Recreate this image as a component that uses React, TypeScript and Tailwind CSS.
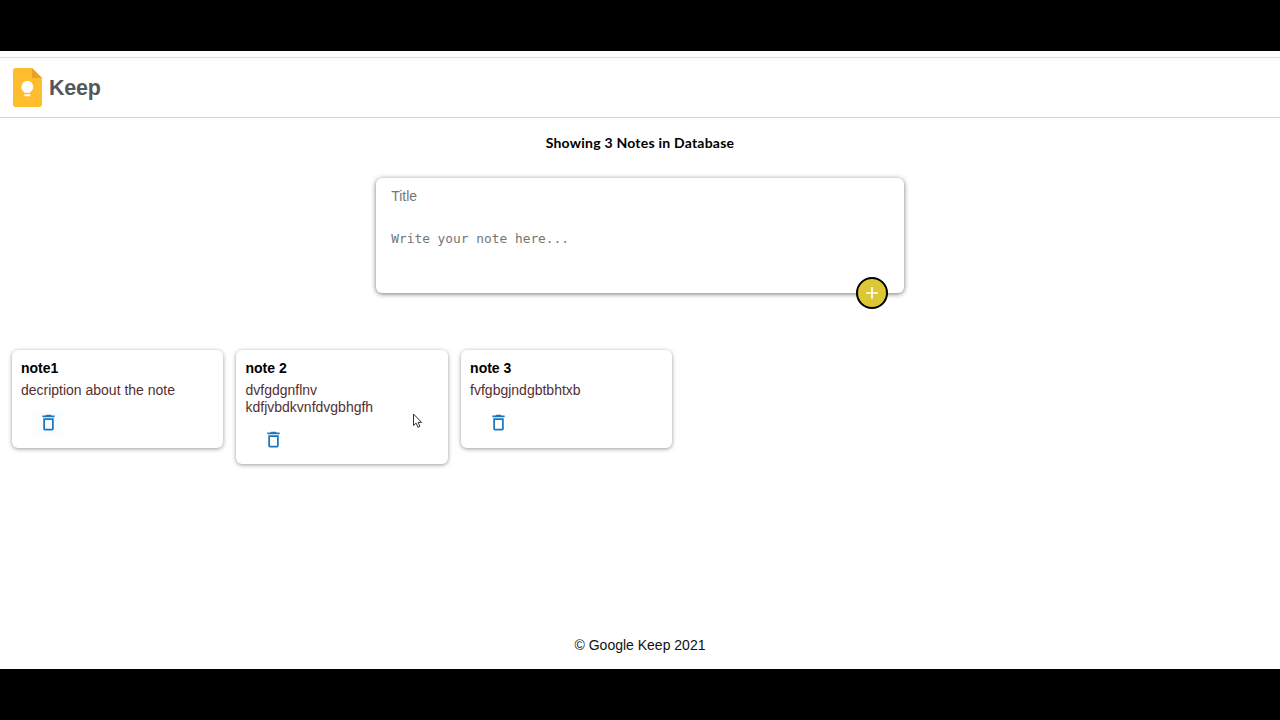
type Note = { title: string; lines: string[]; hovered?: boolean };

const notes: Note[] = [
  { title: "note1", lines: ["decription about the note"], hovered: true },
  { title: "note 2", lines: ["dvfgdgnflnv", "kdfjvbdkvnfdvgbhgfh"] },
  { title: "note 3", lines: ["fvfgbgjndgbtbhtxb"] },
];

function KeepLogo() {
  return (
    <svg className="h-[39px] w-[29px]" viewBox="0 0 29 39">
      <path fill="#fdbd2c" d="M2.7 0H19L29 10V36.3A2.7 2.7 0 0 1 26.3 39H2.7A2.7 2.7 0 0 1 0 36.3V2.7A2.7 2.7 0 0 1 2.7 0Z" />
      <path fill="#e8a02a" d="M19 0L29 10H19Z" />
      <path fill="#fff" d="M14.3 13a5.9 5.9 0 0 1 3.1 10.9v.9h-6.2v-.9a5.9 5.9 0 0 1 3.1-10.9ZM11.3 26.2h6v2h-6z" />
    </svg>
  );
}

function TrashIcon() {
  return (
    <svg className="size-[21px]" viewBox="0 0 24 24" fill="#1b76bd">
      <path d="M6 19c0 1.1.9 2 2 2h8c1.1 0 2-.9 2-2V7H6v12zM8 9h8v10H8V9zm7.5-5l-1-1h-5l-1 1H5v2h14V4z" />
    </svg>
  );
}

function NoteCard({ note }: { note: Note }) {
  return (
    <article className="w-[211.6px] rounded-[6px] bg-white px-[9.4px] pt-[9px] pb-[11px] shadow-[0_1px_4px_rgba(0,0,0,0.4)]">
      <h2 className="h-[19px] text-[14px] leading-[19px] font-bold text-black">{note.title}</h2>
      <div className="mt-[4px] text-[14px] leading-[16.5px] text-[#532f32]">
        {note.lines.map((line) => (
          <p key={line} className="whitespace-nowrap">{line}</p>
        ))}
      </div>
      <button
        aria-label="Delete note"
        className={`mt-[12px] flex h-[26px] w-[56px] items-center justify-center rounded-[3px] pb-[2px] ${note.hovered ? "bg-linear-to-r from-white via-[#f8fcff] to-white" : ""}`}
      >
        <TrashIcon />
      </button>
    </article>
  );
}

export default function App() {
  return (
    <div className="flex h-[720px] w-[1280px] flex-col overflow-hidden bg-black py-[51px] font-['Liberation_Sans',Arial,sans-serif]">
      <div className="flex min-h-0 flex-1 flex-col bg-white">
        <div className="h-[7px] shrink-0 border-b border-[#dee1e3]" />
        <header className="flex h-[60px] shrink-0 items-center gap-[7px] border-b border-[#d3d5d7] pl-[13px]">
          <KeepLogo />
          <h1 className="text-[21.5px] leading-[26px] font-bold tracking-[-0.2px] text-[#53585a]">Keep</h1>
        </header>
        <p className="mt-[15px] h-[20px] text-center font-['Lato',sans-serif] text-[14px] leading-[19px] font-bold tracking-[0.23px] text-black">
          Showing 3 Notes in Database
        </p>
        <form className="relative mx-auto mt-[25px] flex h-[115px] w-[527.6px] shrink-0 flex-col rounded-[6px] bg-white px-[15px] pt-[10px] shadow-[0_1px_5px_rgba(0,0,0,0.55)]">
          <span className="text-[14px] leading-[16px] text-[#757575]">Title</span>
          <span className="mt-[26px] font-['DejaVu_Sans_Mono',monospace] text-[12.85px] leading-[18px] text-[#757575]">
            Write your note here...
          </span>
          <button
            type="button"
            aria-label="Add note"
            className="absolute right-[16px] bottom-[-16px] flex size-[32px] items-center justify-center rounded-full border-2 border-black bg-[#dcc834]"
          >
            <svg className="size-[20px]" viewBox="0 0 24 24" fill="#fff">
              <path d="M19 13h-6v6h-2v-6H5v-2h6V5h2v6h6v2z" />
            </svg>
          </button>
        </form>
        <main className="relative mt-[57px] flex items-start gap-[13px] pl-[11.5px]">
          {notes.map((note) => (
            <NoteCard key={note.title} note={note} />
          ))}
          <svg className="absolute top-[63px] left-[412px] h-[16px] w-[11px]" viewBox="0 0 11 16">
            <path d="M1.5 1v11.5l2.6-2.4 1.8 4.2 2-.9-1.8-4h3.5z" fill="#fff" stroke="#333" strokeWidth="1" />
          </svg>
        </main>
        <footer className="mt-auto pb-[15px] text-center text-[14px] leading-[18px] text-[#111]">© Google Keep 2021</footer>
      </div>
    </div>
  );
}
